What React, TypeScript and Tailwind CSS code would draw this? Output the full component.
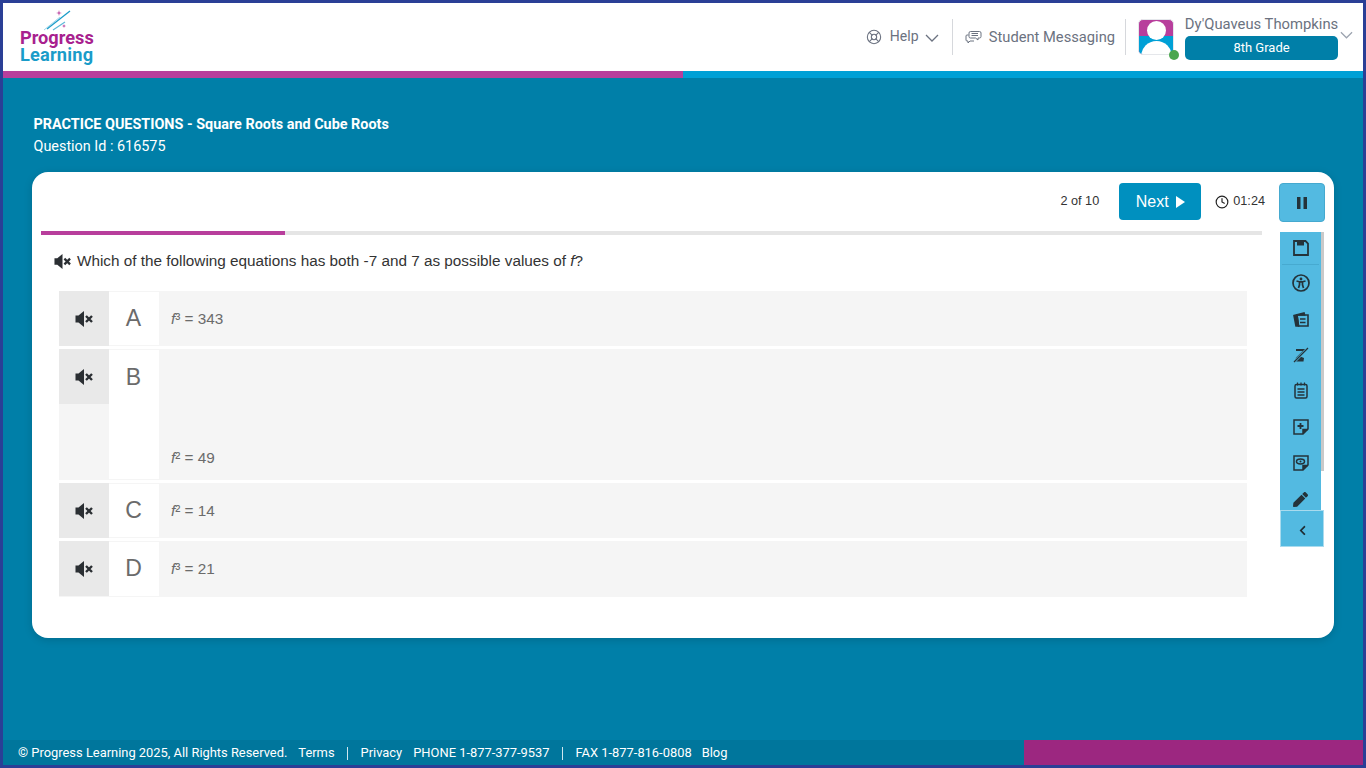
import { Clock, LifeBuoy } from "lucide-react";
import { FaChevronLeft, FaPen } from "react-icons/fa";

function Logo() {
  return (
    <div className="relative w-[76px] h-[54px] pt-[19px] font-['Roboto',sans-serif] font-bold text-[18.200px] leading-[17px]">
      <svg className="absolute left-[23px] top-0 w-[32px] h-[22px]" viewBox="0 0 32 22" fill="none">
        <path d="M1 20L17 7" stroke="#9fd6ea" strokeWidth="1" />
        <path d="M4 19L27 1" stroke="#1a9cc9" strokeWidth="1.300" />
        <path d="M10 20L22 12" stroke="#5cb8d8" strokeWidth="1.200" />
        <path d="M16 0l.6 2.400 2.400.6-2.400.6-.6 2.400-.6-2.400-2.400-.6 2.400-.6z" fill="#b83e9c" />
        <path d="M21 14l.5 1.500 1.500.5-1.500.5-.5 1.500-.5-1.500-1.500-.5 1.500-.5z" fill="#b83e9c" />
      </svg>
      <div className="text-[#a8218e]">Progress</div>
      <div className="text-[#1a9cc9] tracking-[0.2px]">Learning</div>
    </div>
  );
}

function Chevron({ className }: { className: string }) {
  return (
    <svg className={className} viewBox="0 0 14 8" fill="none" stroke="currentColor" strokeWidth="1.300">
      <path d="M1 1l6 6 6-6" />
    </svg>
  );
}

function MuteIcon({ className }: { className: string }) {
  return (
    <svg className={className} viewBox="0 0 18 18" fill="#2b2f33">
      <path d="M0.500 5.500h3L9 1v16l-5.500-4.500h-3z" />
      <path d="M11 6l6 6M17 6l-6 6" stroke="#2b2f33" strokeWidth="2.400" />
    </svg>
  );
}

function MessageIcon() {
  return (
    <svg className="w-[17px] h-[15px]" viewBox="0 0 17 15" fill="none" stroke="#6b7280" strokeWidth="1">
      <path d="M5.500 1.500h9a1.500 1.500 0 0 1 1.500 1.500v3.500a1.500 1.500 0 0 1-1.500 1.500H13v2l-2.500-2H5.500A1.500 1.500 0 0 1 4 6.500V3a1.500 1.500 0 0 1 1.500-1.500z" />
      <path d="M6.500 3.500h6.500M6.500 5.500h6.500" />
      <path d="M3.500 5H2a1 1 0 0 0-1 1v4a1 1 0 0 0 1 1h1v2l2-2h4" />
    </svg>
  );
}

function Avatar() {
  return (
    <div className="relative w-[36px] h-[36px]">
      <div className="w-[36px] h-[36px] rounded-[5px] overflow-hidden border border-[#e5e7eb] bg-[#b83e9c] relative">
        <div className="absolute left-0 right-0 bottom-0 h-[18px] bg-[#00a0d6]" />
        <div className="absolute left-[8px] top-[1px] w-[19px] h-[19px] rounded-full bg-white" />
        <div className="absolute left-[2px] top-[21px] w-[31px] h-[24px] rounded-t-full bg-white" />
      </div>
      <div className="absolute right-[-5px] bottom-[-5px] w-[10px] h-[10px] rounded-full bg-[#4aa64e]" />
    </div>
  );
}

function Header() {
  return (
    <header className="h-[68px] bg-white flex items-center justify-between pl-[17px] pr-[10px] font-['Roboto',sans-serif]">
      <Logo />
      <div className="flex items-center text-[#6b7280]">
        <div className="flex items-center h-[36px] pr-[13px] border-r border-[#d6d8dc]">
          <LifeBuoy size={16} strokeWidth={1.600} />
          <span className="ml-[8px] text-[14px] tracking-[0.1px] mb-[1px]">Help</span>
          <Chevron className="ml-[6px] w-[14px] h-[8px] mt-[2px]" />
        </div>
        <div className="flex items-center gap-[7px] h-[36px] pl-[12px] pr-[10px] border-r border-[#d6d8dc]">
          <MessageIcon />
          <span className="text-[14.700px]">Student Messaging</span>
        </div>
        <div className="flex items-center pl-[12px]">
          <Avatar />
          <div className="ml-[11px] mt-[2px] w-[153px] flex flex-col items-center">
            <span className="text-[14.800px] leading-[17px] whitespace-nowrap">Dy&apos;Quaveus Thompkins</span>
            <div className="mt-[3px] w-[153px] h-[24px] rounded-[5px] bg-[#007fa8] text-white text-[13px] flex items-center justify-center">
              8th Grade
            </div>
          </div>
          <Chevron className="ml-[2px] w-[13px] h-[8px] text-[#9ca3af] mb-[4px]" />
        </div>
      </div>
    </header>
  );
}

const answers = [
  { letter: "A", text: "³ = 343", h: "h-[55px]", top: "pt-[11px]" },
  { letter: "B", text: "² = 49", h: "h-[131px]", top: "pt-[12px]" },
  { letter: "C", text: "² = 14", h: "h-[55px]", top: "pt-[11px]" },
  { letter: "D", text: "³ = 21", h: "h-[56px]", top: "pt-[11px]" },
];

function AnswerRow({ letter, text, h, top }: { letter: string; text: string; h: string; top: string }) {
  const tall = letter === "B";
  return (
    <div className={`flex ${h} bg-[#f5f5f5]`}>
      <div className="w-[50px] h-[55px] bg-[#e9e9e9] flex items-center justify-center shrink-0">
        <MuteIcon className="w-[18px] h-[18px]" />
      </div>
      <div className={`w-[50px] mt-px mb-px pr-px bg-white flex justify-center ${top} shrink-0 text-[#6b6b6b] text-[23px] leading-[30px]`}>
        {letter}
      </div>
      <div className={`pl-[12px] text-[15.300px] text-[#6b6b6b] flex ${tall ? "items-end pb-[10px]" : "items-center pt-px"}`}>
        <span>
          <i>f</i>
          {text}
        </span>
      </div>
    </div>
  );
}

function RailIcon({ children }: { children: React.ReactNode }) {
  return <div className="h-[36px] flex items-center justify-center">{children}</div>;
}

function ToolRail() {
  const c = "#24333a";
  return (
    <div className="w-[44px]">
      <div className="h-[278px] flex">
        <div className="w-[41px] h-[278px] overflow-hidden bg-[#53bae1]">
          <div className="h-[33px] flex items-center justify-center border-b border-[#47aad0] mx-[2px]">
            <svg width="16" height="16" viewBox="0 0 16 16" fill="none" stroke={c} strokeWidth="1.800">
              <path d="M1 1h11.500L15 3.500V15H1z" />
              <path d="M4 1h7v4.500H4z" fill={c} stroke="none" />
            </svg>
          </div>
          <RailIcon>
            <svg width="18" height="18" viewBox="0 0 18 18" fill="none" stroke={c} strokeWidth="1.700">
              <circle cx="9" cy="9" r="8" />
              <circle cx="9" cy="5" r="1.400" fill={c} stroke="none" />
              <path d="M4.500 7l3 .8v3L6.500 14M13.500 7l-3 .8v3l1 3.200M7.500 7.800h3" />
            </svg>
          </RailIcon>
          <RailIcon>
            <svg width="16" height="15" viewBox="0 0 16 15" fill="none" stroke={c} strokeWidth="1.600">
              <path d="M4 3h11v11H5.500z" fill="#53bae1" />
              <path d="M1 3.500L11 1l.5 2H4l1.500 11L3 14z" fill={c} />
              <path d="M7 7h5.500M7 10.500h5.500" />
            </svg>
          </RailIcon>
          <RailIcon>
            <svg width="16" height="16" viewBox="0 0 16 16" fill="none" stroke={c} strokeWidth="1.800">
              <path d="M3 3h9L4 11" />
              <path d="M3 10.500l3-1.500 5 2-.5 3.500H2z" fill={c} stroke="none" />
              <path d="M1 15L15 1" stroke="#53bae1" strokeWidth="2.600" />
              <path d="M1 15L15 1" strokeWidth="1.200" />
            </svg>
          </RailIcon>
          <div className="h-[36px] pb-[2px] flex items-center justify-center">
            <svg width="14" height="17" viewBox="0 0 14 17" fill="none" stroke={c} strokeWidth="1.500">
              <rect x="1" y="2.500" width="12" height="13.500" rx="1.500" />
              <path d="M3.500 0.500v3M7 0.500v3M10.500 0.500v3" strokeWidth="1.200" />
              <path d="M3.500 7h7M3.500 10h7M3.500 13h7" strokeWidth="1.300" />
            </svg>
          </div>
          <RailIcon>
            <svg width="16" height="16" viewBox="0 0 16 16" fill="none" stroke={c} strokeWidth="1.500">
              <path d="M1 1h14v9l-5 5H1z" />
              <path d="M10 15v-4.500h5" fill={c} />
              <path d="M7.500 4v6M4.500 7h6" strokeWidth="1.800" />
            </svg>
          </RailIcon>
          <RailIcon>
            <svg width="16" height="16" viewBox="0 0 16 16" fill="none" stroke={c} strokeWidth="1.500">
              <path d="M1 1h14v9l-5 5H1z" />
              <path d="M10 15v-4.500h5" fill={c} />
              <ellipse cx="7.500" cy="6.500" rx="4" ry="2.400" />
              <circle cx="7.500" cy="6.500" r="1" fill={c} stroke="none" />
            </svg>
          </RailIcon>
          <RailIcon>
            <FaPen size={15} color={c} />
          </RailIcon>
        </div>
        <div className="w-[3px] bg-[#c9c9c9] h-[239px]" />
      </div>
      <div className="w-[44px] h-[37px] pt-[3px] bg-[#53bae1] border border-[#a9dbee] flex items-center justify-center">
        <FaChevronLeft size={11} color="#1f2d33" />
      </div>
    </div>
  );
}

function QuestionCard() {
  return (
    <section className="mx-[29px] h-[466px] bg-white rounded-[16px] flex pl-[9px] font-['Liberation_Sans',sans-serif] shadow-[0_2px_8px_rgba(0,0,0,0.15)]">
      <div className="w-[1224px] flex flex-col">
        <div className="h-[59px] pt-[11px] flex items-start justify-end">
          <div className="h-[37px] flex items-center text-[12.700px] text-[#333]">
            <span>2 of 10</span>
            <button className="ml-[20px] w-[82px] h-[37px] rounded-[4px] bg-[#0090bf] text-white text-[16px] flex items-center justify-center gap-[7px]">
              Next
              <svg className="w-[9px] h-[12px]" viewBox="0 0 9 12" fill="white">
                <path d="M0 0l9 6-9 6z" />
              </svg>
            </button>
            <Clock size={14} strokeWidth={2} className="ml-[14px] text-[#222]" />
            <span className="ml-[4px]">01:24</span>
          </div>
        </div>
        <div className="w-[1221px] h-[4px] bg-[#e5e5e5] shrink-0">
          <div className="w-[244px] h-full bg-[#b83e9c]" />
        </div>
        <div className="flex items-center gap-[6px] pl-[13px] mt-[16px] h-[20px] text-[15.300px] text-[#333]">
          <MuteIcon className="w-[17px] h-[17px]" />
          <span>
            Which of the following equations has both -7 and 7 as possible values of <i>f</i>?
          </span>
        </div>
        <div className="mt-[20px] ml-[18px] w-[1188px] flex flex-col gap-[3px]">
          {answers.map((a) => (
            <AnswerRow key={a.letter} {...a} />
          ))}
        </div>
      </div>
      <div className="ml-[14px] pt-[11px] flex flex-col">
        <button className="w-[46px] h-[39px] rounded-[4px] bg-[#53bae1] border border-[#45a9cf] flex items-center justify-center">
          <svg className="w-[10px] h-[12px]" viewBox="0 0 10 12" fill="#24333a">
            <path d="M0 0h3.500v12H0zM6.500 0H10v12H6.500z" />
          </svg>
        </button>
        <div className="mt-[10px] ml-[1px]">
          <ToolRail />
        </div>
      </div>
    </section>
  );
}

function Footer() {
  return (
    <footer className="h-[25px] flex font-['Roboto',sans-serif] text-[12.900px] text-white">
      <div className="w-[1021px] bg-[#00769c] flex items-center pl-[15px] pt-[1px]">
        <span>© Progress Learning 2025, All Rights Reserved.</span>
        <span className="ml-[11px]">Terms</span>
        <span className="ml-[12px] w-px h-[13px] bg-[#cfe6ef]" />
        <span className="ml-[13px]">Privacy</span>
        <span className="ml-[11px]">PHONE 1-877-377-9537</span>
        <span className="ml-[12px] w-px h-[13px] bg-[#cfe6ef]" />
        <span className="ml-[13px]">FAX 1-877-816-0808</span>
        <span className="ml-[10px]">Blog</span>
      </div>
      <div className="flex-1 bg-[#9c2780]" />
    </footer>
  );
}

export default function App() {
  return (
    <div className="h-screen border-[3px] border-[#2a3f96] bg-[#007fa8] flex flex-col overflow-hidden">
      <Header />
      <div className="h-[7px] flex shrink-0">
        <div className="w-[680px] bg-[#b83e9c]" />
        <div className="flex-1 bg-[#00a0d6]" />
      </div>
      <main className="flex-1">
        <div className="pt-[38px] pl-[30.500px] h-[94px] font-['Roboto',sans-serif] text-white text-[14.400px]">
          <h1 className="font-bold leading-[18px]">PRACTICE QUESTIONS - Square Roots and Cube Roots</h1>
          <p className="mt-[4px] leading-[18px]">Question Id : 616575</p>
        </div>
        <QuestionCard />
      </main>
      <Footer />
    </div>
  );
}
